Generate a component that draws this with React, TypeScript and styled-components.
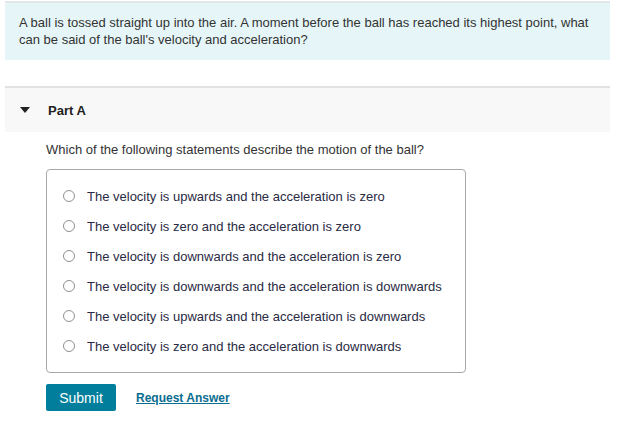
import React from "react";
import styled, { createGlobalStyle } from "styled-components";

const Global = createGlobalStyle`
  html, body { margin: 0; padding: 0; background: #fff; }
  body { font-family: "Liberation Sans", Arial, sans-serif; color: #333; }
`;

const Page = styled.div`
  width: 605px;
  margin-left: 5px;
  padding-top: 1px;
`;

const Intro = styled.div`
  background: #e6f6f8;
  border-top: 2px solid #e2e8e9;
  padding: 11px 14px 12px 14px;
  font-size: 13px;
  line-height: 17px;
  color: #333;
`;

const PartHeader = styled.div`
  margin-top: 26px;
  border-top: 2px solid #e2e2e2;
  background: #f8f8f8;
  height: 44px;
  display: flex;
  align-items: center;
  padding-left: 15px;
  gap: 18px;
`;

const Caret = styled.span`
  width: 0;
  height: 0;
  border-left: 5px solid transparent;
  border-right: 5px solid transparent;
  border-top: 6px solid #222;
`;

const PartTitle = styled.span`
  font-size: 13px;
  font-weight: bold;
  color: #222;
`;

const Body = styled.div`
  padding-left: 41px;
`;

const Prompt = styled.p`
  margin: 9px 0 0;
  font-size: 13px;
  line-height: 18px;
`;

const Choices = styled.div`
  margin-top: 10px;
  width: 420px;
  height: 204px;
  border: 1px solid #a8a8a8;
  border-radius: 4px;
  box-sizing: border-box;
  padding: 11px 0 0 16px;
  display: flex;
  flex-direction: column;
`;

const Choice = styled.label`
  display: flex;
  align-items: center;
  height: 30px;
  gap: 12px;
  font-size: 13px;
  color: #2a2a44;
`;

const Radio = styled.span`
  width: 10px;
  height: 10px;
  border: 1px solid #8f8f8f;
  border-radius: 50%;
  flex: none;
`;

const Actions = styled.div`
  margin-top: 11px;
  display: flex;
  align-items: center;
  gap: 20px;
`;

const SubmitButton = styled.button`
  width: 70px;
  height: 27px;
  border: none;
  border-radius: 2px;
  background: #007e9b;
  color: #fff;
  font-family: "Liberation Sans", Arial, sans-serif;
  font-size: 14px;
  padding: 0;
`;

const Link = styled.a`
  color: #0a6d8f;
  font-weight: bold;
  font-size: 12px;
  text-decoration: underline;
`;

const options = [
  "The velocity is upwards and the acceleration is zero",
  "The velocity is zero and the acceleration is zero",
  "The velocity is downwards and the acceleration is zero",
  "The velocity is downwards and the acceleration is downwards",
  "The velocity is upwards and the acceleration is downwards",
  "The velocity is zero and the acceleration is downwards",
];

export default function App() {
  return (
    <>
      <Global />
      <Page>
        <Intro>
          A ball is tossed straight up into the air. A moment before the ball has reached its highest point, what
          can be said of the ball's velocity and acceleration?
        </Intro>
        <PartHeader>
          <Caret />
          <PartTitle>Part A</PartTitle>
        </PartHeader>
        <Body>
          <Prompt>Which of the following statements describe the motion of the ball?</Prompt>
          <Choices>
            {options.map((o) => (
              <Choice key={o}>
                <Radio />
                {o}
              </Choice>
            ))}
          </Choices>
          <Actions>
            <SubmitButton>Submit</SubmitButton>
            <Link href="#">Request Answer</Link>
          </Actions>
        </Body>
      </Page>
    </>
  );
}
